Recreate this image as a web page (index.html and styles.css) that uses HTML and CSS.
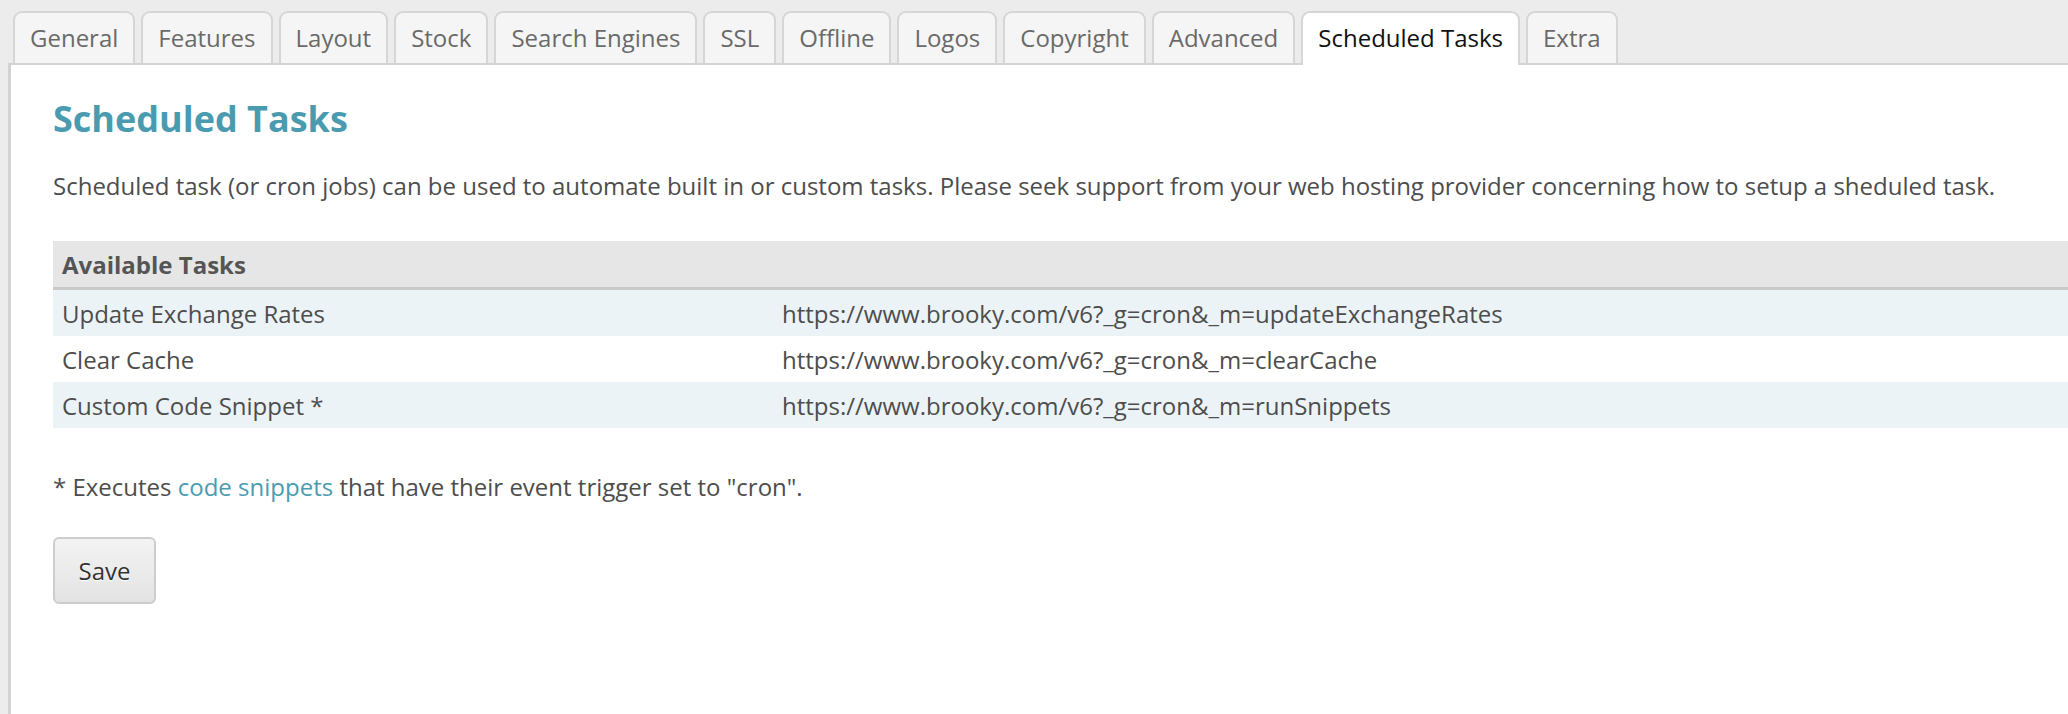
FILE: index.html
```html
<!DOCTYPE html>
<html>
<head>
<meta charset="utf-8">
<link rel="stylesheet" href="styles.css">
</head>
<body>
<div class="tabs">
  <div class="tab">General</div>
  <div class="tab">Features</div>
  <div class="tab">Layout</div>
  <div class="tab">Stock</div>
  <div class="tab">Search Engines</div>
  <div class="tab">SSL</div>
  <div class="tab">Offline</div>
  <div class="tab">Logos</div>
  <div class="tab">Copyright</div>
  <div class="tab">Advanced</div>
  <div class="tab active">Scheduled Tasks</div>
  <div class="tab">Extra</div>
</div>
<div class="panel">
  <h1 class="title">Scheduled Tasks</h1>
  <p class="intro">Scheduled task (or cron jobs) can be used to automate built in or custom tasks. Please seek support from your web hosting provider concerning how to setup a sheduled task.</p>
  <table class="tasks">
    <thead>
      <tr><th colspan="2">Available Tasks</th></tr>
    </thead>
    <tbody>
      <tr class="odd"><td class="name">Update Exchange Rates</td><td>https://www.brooky.com/v6?_g=cron&amp;_m=updateExchangeRates</td></tr>
      <tr><td class="name">Clear Cache</td><td>https://www.brooky.com/v6?_g=cron&amp;_m=clearCache</td></tr>
      <tr class="odd"><td class="name">Custom Code Snippet *</td><td>https://www.brooky.com/v6?_g=cron&amp;_m=runSnippets</td></tr>
    </tbody>
  </table>
  <p class="note">* Executes <a href="#" class="link">code snippets</a> that have their event trigger set to "cron".</p>
  <button class="save">Save</button>
</div>
</body>
</html>
```
FILE: styles.css
```css
html, body {
  margin: 0;
  padding: 0;
}
body {
  background: #ececec;
  font-family: "Open Sans", "DejaVu Sans", sans-serif;
  color: #4d4d4d;
  width: 2068px;
  height: 714px;
  overflow: hidden;
  display: flex;
  flex-direction: column;
}
.tabs {
  display: flex;
  gap: 6px;
  padding: 11px 0 0 13px;
}
.tab {
  height: 52px;
  box-sizing: border-box;
  padding: 0 15px;
  border: 2px solid #d6d6d6;
  border-bottom: none;
  border-radius: 9px 9px 0 0;
  background: #f5f5f5;
  color: #6a6a6a;
  font-size: 24px;
  line-height: 50px;
  white-space: nowrap;
}
.tab.active {
  background: #fff;
  color: #111;
  height: 54px;
  margin-bottom: -2px;
  position: relative;
  z-index: 2;
}
.panel {
  flex: 1;
  min-height: 0;
  background: #fff;
  border-top: 2px solid #d3d3d3;
  border-left: 3px solid #d3d3d3;
  margin-left: 8px;
  padding: 0 0 0 42px;
}
.title {
  margin: 0;
  padding-top: 30px;
  font-size: 36px;
  font-weight: 700;
  color: #4b9bb0;
  line-height: 48px;
}
.intro {
  margin: 27px 0 0 0;
  font-size: 24px;
  line-height: 32px;
}
.tasks {
  margin-top: 39px;
  width: 100%;
  border-collapse: collapse;
  font-size: 24px;
}
.tasks th {
  background: #e6e6e6;
  text-align: left;
  font-weight: 700;
  color: #555;
  height: 46px;
  padding: 0 9px;
  border-bottom: 3px solid #c9c9c9;
}
.tasks td {
  height: 46px;
  padding: 0 9px;
  white-space: nowrap;
}
.tasks td.name {
  width: 702px;
}
.tasks tr.odd td {
  background: #ebf3f7;
}
.note {
  margin: 43px 0 0 0;
  font-size: 24px;
  line-height: 32px;
}
.link {
  color: #4a9cb1;
  text-decoration: none;
}
.save {
  display: block;
  margin-top: 34px;
  width: 103px;
  height: 67px;
  border: 2px solid #cdcdcd;
  border-radius: 6px;
  background: linear-gradient(#f3f3f3, #e3e3e3);
  font-family: "Open Sans", sans-serif;
  font-size: 24px;
  color: #333;
  text-shadow: 0 1px 1px #fff;
  padding: 0;
}
```
